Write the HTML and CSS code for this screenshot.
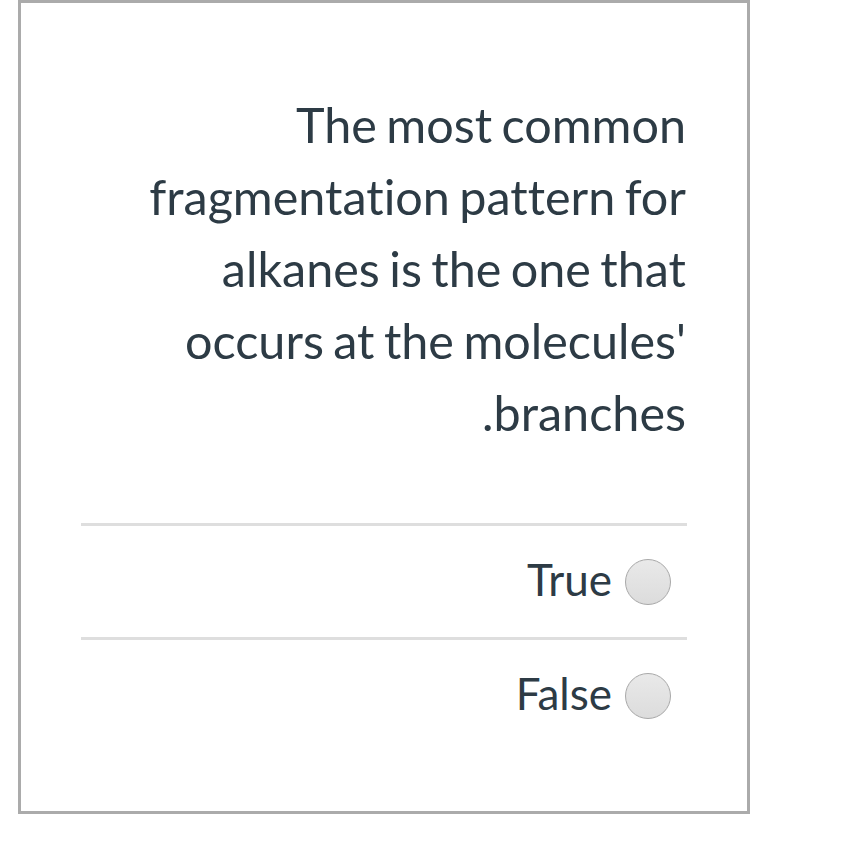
FILE: index.html
```html
<!DOCTYPE html>
<html>
<head>
<meta charset="utf-8">
<link rel="stylesheet" href="styles.css">
</head>
<body>
<div class="card">
  <div class="question" dir="rtl">The most common fragmentation pattern for alkanes is the one that occurs at the molecules' branches.</div>
  <div class="answers">
    <div class="answer"><span class="label">True</span><span class="radio"></span></div>
    <div class="answer"><span class="label">False</span><span class="radio"></span></div>
  </div>
</div>
</body>
</html>
```
FILE: styles.css
```css
html, body {
  margin: 0;
  padding: 0;
  background: #ffffff;
}
body {
  font-family: Lato, "Open Sans", sans-serif;
  color: #2d3b45;
  font-variant-ligatures: none;
}
.card {
  margin-left: 18px;
  margin-top: 0;
  width: 726px;
  height: 808px;
  border: 3px solid #ababab;
  box-sizing: content-box;
  padding: 0;
}
.question {
  margin: 85px 61px 0 60px;
  font-size: 48.5px;
  line-height: 72px;
  word-spacing: -3px;
  text-align: right;
  height: 360px;
}
.answers {
  margin: 75px 60px 0 60px;
}
.answer {
  border-top: 3px solid #dedede;
  height: 111px;
  display: flex;
  align-items: center;
  justify-content: flex-end;
  padding-right: 16px;
  gap: 13px;
}
.label {
  font-size: 44px;
  line-height: 50px;
  margin-top: -6px;
}
.radio {
  width: 44px;
  height: 44px;
  border-radius: 50%;
  border: 1px solid #a8a8a8;
  background: linear-gradient(#e9e9e9, #dcdcdc);
  box-sizing: content-box;
}
```
